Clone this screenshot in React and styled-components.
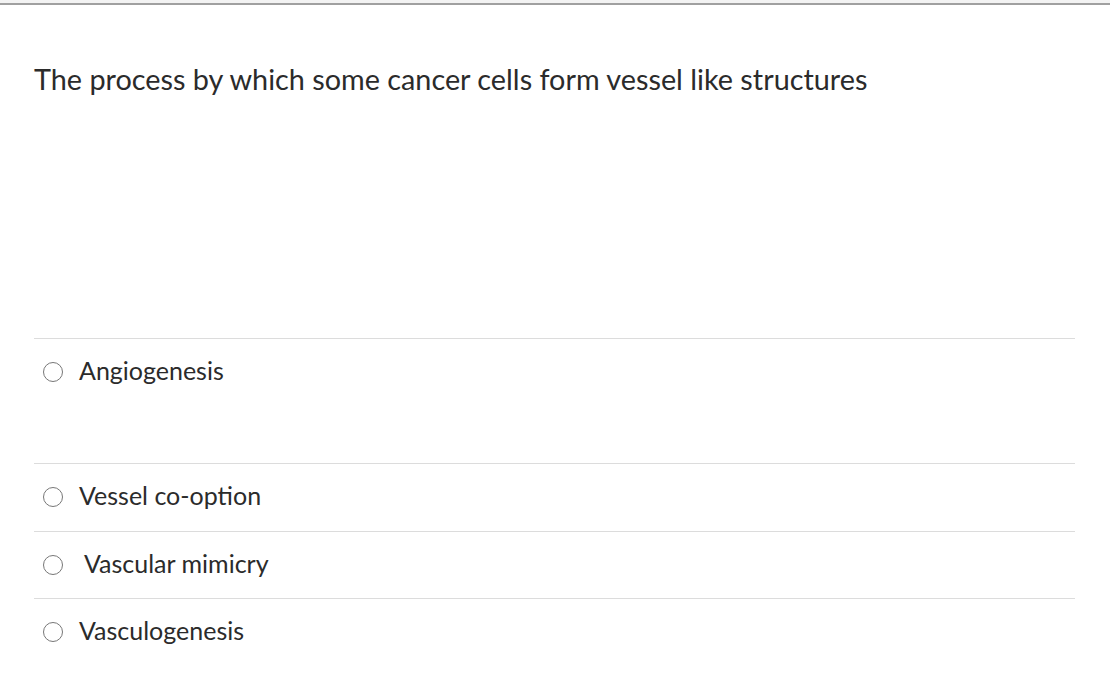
import React from "react";
import styled, { createGlobalStyle } from "styled-components";

const Global = createGlobalStyle`
  html, body { margin: 0; padding: 0; background: #fff; }
  body { font-family: Lato, "Noto Sans", sans-serif; color: #2b2b2b; }
`;

const TopBar = styled.div`
  height: 3px;
  background: #f3f3f3;
  border-bottom: 2px solid #a0a0a0;
`;

const Content = styled.div`
  padding: 0 35px 0 34px;
`;

const Question = styled.div`
  font-size: 28.8px;
  line-height: 36px;
  padding-top: 56px;
  height: 333px;
  box-sizing: border-box;
`;

const Option = styled.label`
  display: flex;
  align-items: flex-start;
  border-top: 1px solid #dcdcdc;
  height: ${(p) => (p.$tall ? 125 : p.$short ? 67 : 68)}px;
  padding-top: 16px;
  box-sizing: border-box;
  font-size: 25px;
  line-height: 30px;
`;

const Radio = styled.span`
  flex: none;
  width: 20px;
  height: 20px;
  margin: 7px 0 0 9px;
  border: 1.5px solid #777;
  border-radius: 50%;
  box-sizing: border-box;
`;

const Label = styled.span`
  margin-left: ${(p) => (p.$indent ? 21 : 16)}px;
  white-space: pre;
`;

const options = [
  { text: "Angiogenesis", tall: true },
  { text: "Vessel co-option" },
  { text: "Vascular mimicry", indent: true, short: true },
  { text: "Vasculogenesis" },
];

export default function App() {
  return (
    <>
      <Global />
      <TopBar />
      <Content>
        <Question>The process by which some cancer cells form vessel like structures</Question>
        {options.map((o) => (
          <Option key={o.text} $tall={o.tall} $short={o.short}>
            <Radio />
            <Label $indent={o.indent}>{o.text}</Label>
          </Option>
        ))}
      </Content>
    </>
  );
}
